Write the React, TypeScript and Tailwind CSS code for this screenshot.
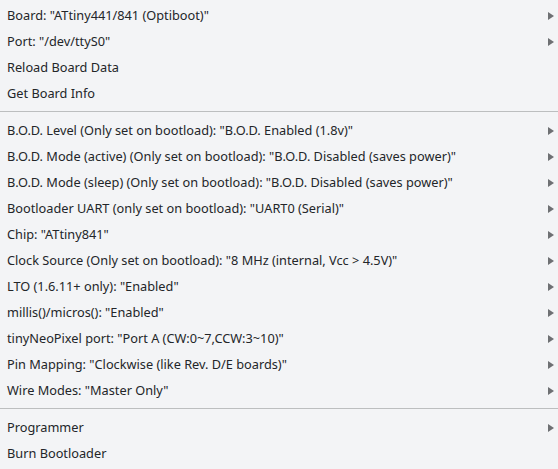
import React from "react";

type MenuItem = {
  label: string;
  submenu?: boolean;
};

const boardItems: MenuItem[] = [
  { label: 'Board: "ATtiny441/841 (Optiboot)"', submenu: true },
  { label: 'Port: "/dev/ttyS0"', submenu: true },
  { label: "Reload Board Data" },
  { label: "Get Board Info" },
];

const optionItems: MenuItem[] = [
  { label: 'B.O.D. Level (Only set on bootload): "B.O.D. Enabled (1.8v)"', submenu: true },
  { label: 'B.O.D. Mode (active) (Only set on bootload): "B.O.D. Disabled (saves power)"', submenu: true },
  { label: 'B.O.D. Mode (sleep) (Only set on bootload): "B.O.D. Disabled (saves power)"', submenu: true },
  { label: 'Bootloader UART (only set on bootload): "UART0 (Serial)"', submenu: true },
  { label: 'Chip: "ATtiny841"', submenu: true },
  { label: 'Clock Source (Only set on bootload): "8 MHz (internal, Vcc > 4.5V)"', submenu: true },
  { label: 'LTO (1.6.11+ only): "Enabled"', submenu: true },
  { label: 'millis()/micros(): "Enabled"', submenu: true },
  { label: 'tinyNeoPixel port: "Port A (CW:0~7,CCW:3~10)"', submenu: true },
  { label: 'Pin Mapping: "Clockwise (like Rev. D/E boards)"', submenu: true },
  { label: 'Wire Modes: "Master Only"', submenu: true },
];

const programmerItems: MenuItem[] = [
  { label: "Programmer", submenu: true },
  { label: "Burn Bootloader" },
];

function Arrow() {
  return (
    <svg width="6" height="8" viewBox="0 0 6 8" className="shrink-0" aria-hidden="true">
      <path d="M0 0 L6 4 L0 8 Z" fill="#6e7073" />
    </svg>
  );
}

function Row({ item }: { item: MenuItem }) {
  return (
    <div className="flex h-[26px] items-center justify-between pl-[7px] pr-[4px]">
      <span className="whitespace-nowrap">{item.label}</span>
      {item.submenu && <Arrow />}
    </div>
  );
}

// line sits 4px below the previous section, 6px above the next
function Separator() {
  return (
    <div className="pt-[4px] pb-[6px]">
      <div className="h-px w-full bg-[#bcbebf]" />
    </div>
  );
}

export default function App() {
  return (
    <div
      className="flex h-[469px] w-[558px] flex-col bg-[#f3f4f6] pt-[3px] text-[12.75px] text-[#232629]"
      style={{ fontFamily: '"Noto Sans", "Open Sans", sans-serif' }}
    >
      {boardItems.map((item) => (
        <Row key={item.label} item={item} />
      ))}
      <Separator />
      {optionItems.map((item) => (
        <Row key={item.label} item={item} />
      ))}
      <Separator />
      {programmerItems.map((item) => (
        <Row key={item.label} item={item} />
      ))}
    </div>
  );
}
